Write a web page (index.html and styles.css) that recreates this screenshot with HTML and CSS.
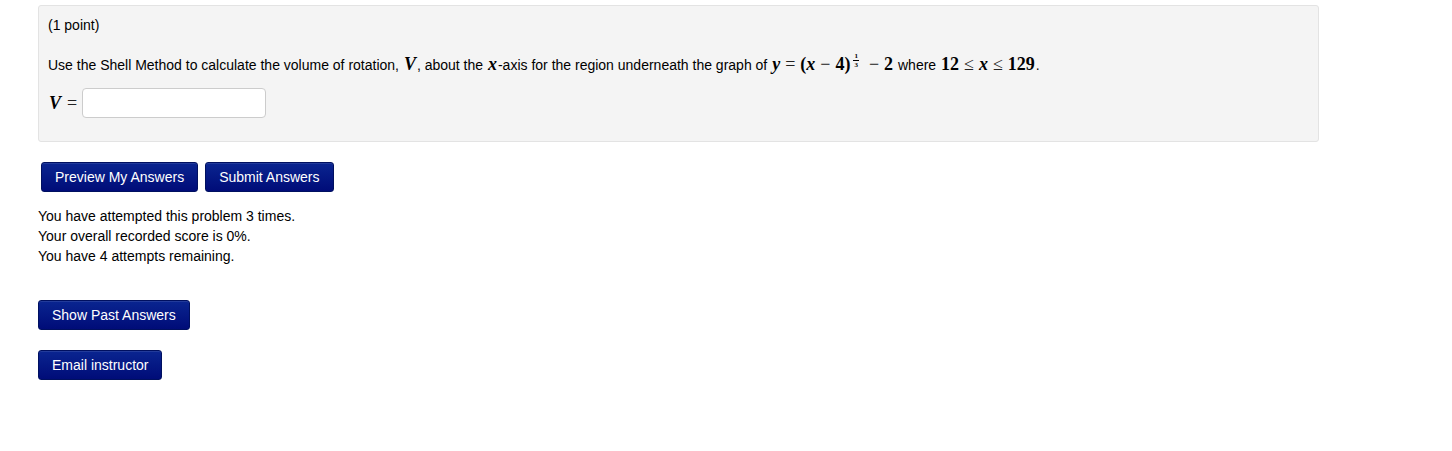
FILE: index.html
```html
<!DOCTYPE html>
<html>
<head>
<meta charset="utf-8">
<link rel="stylesheet" href="styles.css">
</head>
<body>
<div class="page">
  <div class="problem">
    <p class="pts">(1 point)</p>
    <p class="stmt">Use the Shell Method to calculate the volume of rotation, <span class="m mi">V</span>, about the <span class="m mi">x</span>-axis for the region underneath the graph of <span class="m"><span class="mi">y</span><span class="op">=</span>(<span class="mi">x</span><span class="op">−</span>4)<span class="frac"><span class="num">1</span><span class="den">3</span></span><span class="op">−</span>2</span> where <span class="m">12<span class="op">≤</span><span class="mi">x</span><span class="op">≤</span>129</span>.</p>
    <div class="ans"><span class="m"><span class="mi">V</span><span class="op eq">=</span></span><input class="box" type="text"></div>
  </div>
  <div class="btns">
    <button class="btn">Preview My Answers</button>
    <button class="btn">Submit Answers</button>
  </div>
  <div class="info">
    <div>You have attempted this problem 3 times.</div>
    <div>Your overall recorded score is 0%.</div>
    <div>You have 4 attempts remaining.</div>
  </div>
  <div class="past"><button class="btn">Show Past Answers</button></div>
  <div class="email"><button class="btn">Email instructor</button></div>
</div>
</body>
</html>
```

FILE: styles.css
```css
html, body {
  margin: 0;
  padding: 0;
  background: #fff;
}
body {
  font-family: "Liberation Sans", Arial, sans-serif;
  font-size: 14px;
  color: #000;
}
.page {
  padding: 5px 0 0 38px;
}
.problem {
  width: 1261px;
  background: #f4f4f4;
  border: 1px solid #e3e3e3;
  border-radius: 3px;
  padding: 9px 9px 23px 9px;
}
.problem p {
  margin: 0;
  line-height: 20px;
}
.stmt {
  margin-top: 18px !important;
  white-space: nowrap;
  height: 21px;
}
.m {
  font-family: "Liberation Serif", "Times New Roman", serif;
  font-size: 18px;
  font-weight: bold;
  line-height: 20px;
  margin: 0 1px;
}
.mi {
  font-style: italic;
}
.op {
  font-weight: normal;
  margin: 0 5px;
  color: #222;
}
.frac {
  display: inline-flex;
  flex-direction: column;
  align-items: center;
  font-size: 7px;
  line-height: 6px;
  vertical-align: 12px;
  margin: 0 5px 0 3px;
}
.frac .num {
  border-bottom: 1px solid #000;
  padding: 0 1px 1px;
}
.frac .den {
  padding-top: 1px;
}
.ans {
  margin-top: 14px;
  display: flex;
  align-items: center;
  height: 30px;
}
.eq {
  margin: 0 4px 0 6px;
}
.box {
  width: 184px;
  height: 30px;
  box-sizing: border-box;
  border: 1px solid #ccc;
  border-radius: 4px;
  background: #fff;
  margin: 0;
  padding: 4px 6px;
}
.btn {
  font-family: "Liberation Sans", Arial, sans-serif;
  font-size: 14px;
  color: #fff;
  height: 30px;
  padding: 0 13px;
  border: 1px solid #001060;
  border-radius: 3px;
  background: linear-gradient(to bottom, #0a2590, #000c78);
  box-shadow: inset 0 1px 0 rgba(255,255,255,0.1);
  margin: 0;
}
.btns {
  margin-top: 20px;
  display: flex;
  gap: 7px;
  padding-left: 3px;
}
.info {
  margin-top: 14px;
  line-height: 20px;
}
.past {
  margin-top: 34px;
}
.email {
  margin-top: 20px;
}
```
